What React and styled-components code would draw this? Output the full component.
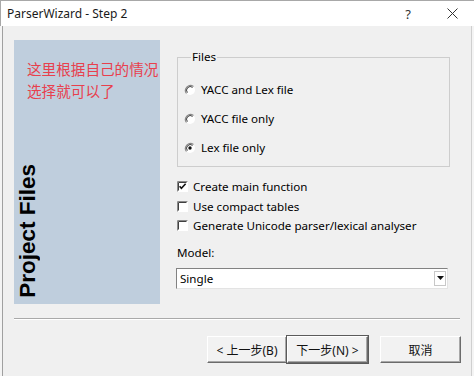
import React from 'react'
import styled, { createGlobalStyle } from 'styled-components'

const UI_FONT = `'Noto Sans', 'Noto Sans CJK SC', sans-serif`

const GlobalStyle = createGlobalStyle`
  html, body {
    margin: 0;
    padding: 0;
    background: #f4f4f4;
  }
  body {
    font-family: ${UI_FONT};
    font-size: 11.6px;
    color: #000;
  }
`

const Window = styled.div`
  width: 474px;
  height: 376px;
  display: flex;
  flex-direction: column;
  overflow: hidden;
`

const TitleBar = styled.div`
  height: 26px;
  flex: none;
  background: #fff;
  display: flex;
  align-items: center;
  padding-left: 6px;
  border-top: 1px solid #a8a8a8;
  border-left: 1px solid #a8a8a8;
  box-sizing: border-box;
`

const Title = styled.div`
  flex: 1;
  font-size: 12px;
  color: #1a1a1a;
`

const TitleButton = styled.div`
  width: 44px;
  height: 26px;
  display: flex;
  align-items: center;
  justify-content: center;
  font-size: 13px;
  color: #333;
`

const Body = styled.div`
  flex: 1;
  margin: 0 2px 0 2px;
  border-left: 1px solid #a0a0a0;
  border-right: 1px solid #cfcfcf;
  background: #f0f0f0;
  padding: 14px 10px 0 11px;
  display: flex;
  flex-direction: column;
`

const Main = styled.div`
  display: flex;
  height: 264px;
`

const SidePanel = styled.div`
  width: 146px;
  flex: none;
  background: #bfcedd;
  display: flex;
  flex-direction: column;
  justify-content: space-between;
  padding: 18px 0 6px 3px;
  box-sizing: border-box;
`

const Note = styled.div`
  color: #e8404d;
  font-size: 14.6px;
  line-height: 22px;
  padding-left: 10px;
  font-family: 'Noto Sans CJK SC', sans-serif;
`

const PanelTitle = styled.div`
  writing-mode: vertical-rl;
  transform: rotate(180deg);
  font-family: 'Liberation Sans', Arial, sans-serif;
  font-weight: bold;
  font-size: 22.5px;
  line-height: 21px;
  color: #000;
  align-self: flex-start;
`

const Content = styled.div`
  width: 273px;
  margin-left: 17px;
  padding-top: 9px;
  display: flex;
  flex-direction: column;
`

const GroupBox = styled.fieldset`
  margin: 0;
  padding: 10px 0 4px 6px;
  border: 1px solid #cdcdcd;
  min-width: 0;
`

const Legend = styled.legend`
  margin-left: 7px;
  padding: 0 1px;
  line-height: 16px;
`

const OptionRow = styled.label`
  display: flex;
  align-items: center;
  height: ${p => p.$h}px;
  gap: ${p => p.$gap}px;
  white-space: nowrap;
`

const Checks = styled.div`
  margin-top: 10px;
  display: flex;
  flex-direction: column;
`

const FieldLabel = styled.div`
  margin-top: 9px;
  line-height: 16px;
`

const Select = styled.div`
  margin-top: 7px;
  height: 21px;
  width: 272px;
  margin-left: -1px;
  box-sizing: border-box;
  background: #fff;
  border-top: 1px solid #828282;
  border-left: 1px solid #828282;
  border-right: 1px solid #e3e3e3;
  border-bottom: 1px solid #e3e3e3;
  display: flex;
  align-items: center;
  padding: 0 1px 0 3px;
`

const SelectValue = styled.div`
  flex: 1;
`

const SelectArrow = styled.div`
  width: 12px;
  height: 15px;
  border: 1px solid #c8c8c8;
  box-sizing: border-box;
  display: flex;
  align-items: center;
  justify-content: center;
`

const Separator = styled.div`
  margin-top: 14px;
  height: 1px;
  margin-right: 1px;
  background: #a9a9a9;
  border-bottom: 1px solid #fff;
`

const ButtonRow = styled.div`
  margin-top: 16px;
  display: flex;
  justify-content: flex-end;
`

const Button = styled.div`
  width: ${p => p.$w}px;
  height: 27px;
  box-sizing: border-box;
  margin-left: ${p => p.$gap || 0}px;
  background: #f2f2f2;
  border-top: 1px solid #fff;
  border-left: 1px solid #fff;
  border-right: 1px solid #6b6b6b;
  border-bottom: 1px solid #6b6b6b;
  box-shadow: ${p => (p.$default ? '0 0 0 1px #5a5a5a, inset -1px -1px 0 #a8a8a8' : 'inset -1px -1px 0 #a8a8a8')};
  display: flex;
  align-items: center;
  justify-content: center;
  font-size: 12px;
  color: #111;
  position: relative;
  z-index: ${p => (p.$default ? 1 : 0)};
`

function Radio({ checked }) {
  return (
    <svg width='12' height='12' viewBox='0 0 12 12'>
      <circle cx='6' cy='6' r='5' fill='#fff' />
      <path d='M9.5 2.5 A5 5 0 0 0 2.5 9.5' fill='none' stroke='#8a8a8a' strokeWidth='1.2' />
      <path d='M8.6 3.4 A3.7 3.7 0 0 0 3.4 8.6' fill='none' stroke='#3c3c3c' strokeWidth='1' />
      {checked && <circle cx='6' cy='6' r='1.7' fill='#111' />}
    </svg>
  )
}

function Checkbox({ checked }) {
  return (
    <svg width='11' height='11' viewBox='0 0 11 11'>
      <rect x='0' y='0' width='11' height='11' fill='#fff' />
      <path d='M0.5 10.5 V0.5 H10.5' fill='none' stroke='#8a8a8a' />
      <path d='M1.5 9.5 V1.5 H9.5' fill='none' stroke='#404040' />
      {checked && <path d='M2.6 5.2 L4.4 7.2 L8.6 2.8' fill='none' stroke='#111' strokeWidth='1.6' />}
    </svg>
  )
}

export default function App() {
  return (
    <>
      <GlobalStyle />
      <Window>
        <TitleBar>
          <Title>ParserWizard - Step 2</Title>
          <TitleButton>?</TitleButton>
          <TitleButton>
            <svg width='11' height='11' viewBox='0 0 11 11'>
              <path d='M0.5 0.5 L10.5 10.5 M10.5 0.5 L0.5 10.5' stroke='#333' strokeWidth='1' />
            </svg>
          </TitleButton>
        </TitleBar>
        <Body>
          <Main>
            <SidePanel>
              <Note>
                这里根据自己的情况
                <br />
                选择就可以了
              </Note>
              <PanelTitle>Project Files</PanelTitle>
            </SidePanel>
            <Content>
              <GroupBox>
                <Legend>Files</Legend>
                <OptionRow $h={29} $gap={5}>
                  <Radio />
                  YACC and Lex file
                </OptionRow>
                <OptionRow $h={29} $gap={5}>
                  <Radio />
                  YACC file only
                </OptionRow>
                <OptionRow $h={29} $gap={5}>
                  <Radio checked />
                  Lex file only
                </OptionRow>
              </GroupBox>
              <Checks>
                <OptionRow $h={19.5} $gap={5}>
                  <Checkbox checked />
                  Create main function
                </OptionRow>
                <OptionRow $h={19.5} $gap={5}>
                  <Checkbox />
                  Use compact tables
                </OptionRow>
                <OptionRow $h={19.5} $gap={5}>
                  <Checkbox />
                  Generate Unicode parser/lexical analyser
                </OptionRow>
              </Checks>
              <FieldLabel>Model:</FieldLabel>
              <Select>
                <SelectValue>Single</SelectValue>
                <SelectArrow>
                  <svg width='7' height='4' viewBox='0 0 7 4'>
                    <path d='M0 0 H7 L3.5 4 Z' fill='#111' />
                  </svg>
                </SelectArrow>
              </Select>
            </Content>
          </Main>
          <Separator />
          <ButtonRow>
            <Button $w={80}>&lt; 上一步(B)</Button>
            <Button $w={81} $default>下一步(N) &gt;</Button>
            <Button $w={81} $gap={12}>取消</Button>
          </ButtonRow>
        </Body>
      </Window>
    </>
  )
}
